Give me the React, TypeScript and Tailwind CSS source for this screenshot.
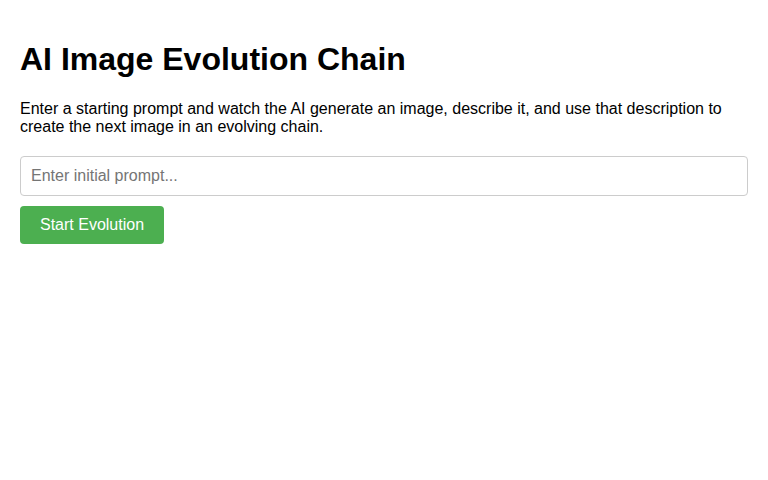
export default function App() {
  return (
    <div className="min-h-screen bg-white p-5 font-['Liberation_Sans',Arial,sans-serif] text-black">
      <h1 className="my-[21.44px] text-[32px] font-bold leading-[normal]">
        AI Image Evolution Chain
      </h1>
      <p className="mb-5 text-base leading-[normal]">
        Enter a starting prompt and watch the AI generate an image, describe it, and use that
        description to create the next image in an evolving chain.
      </p>
      <input
        type="text"
        placeholder="Enter initial prompt..."
        className="block w-full rounded border border-[#ccc] p-2.5 text-base leading-[normal] placeholder:text-[#757575] outline-none"
      />
      <button className="mt-2.5 rounded bg-[#4CAF50] px-5 py-2.5 text-base leading-[normal] text-white">
        Start Evolution
      </button>
    </div>
  )
}
